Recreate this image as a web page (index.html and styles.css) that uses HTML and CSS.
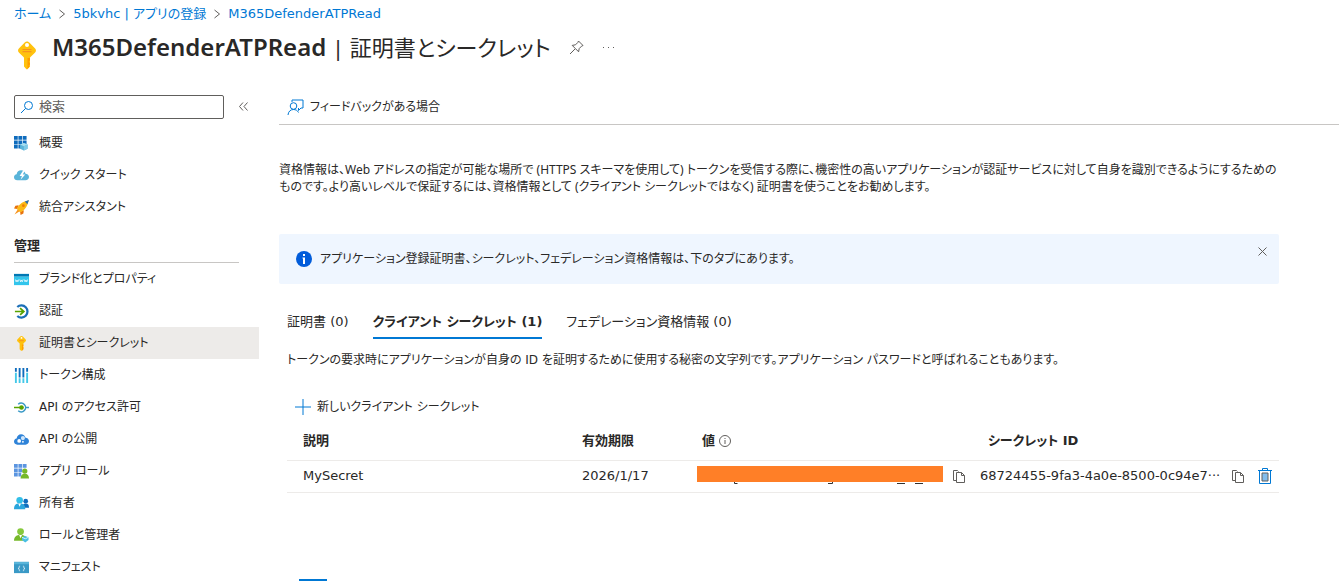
FILE: index.html
```html
<!DOCTYPE html>
<html lang="ja">
<head>
  <meta charset="UTF-8">
  <meta name="viewport" content="width=device-width, initial-scale=1">
  <title>M365DefenderATPRead | 証明書とシークレット</title>
  <link rel="stylesheet" href="styles.css">
</head>
<body>

  <header class="page-header">
    <nav class="breadcrumb" aria-label="階層リンク">
      <a href="#">ホーム</a>
      <svg class="chevron" viewBox="0 0 8 10"><path d="M1.500 1 6.500 5 1.500 9"/></svg>
      <a href="#">5bkvhc | アプリの登録</a>
      <svg class="chevron" viewBox="0 0 8 10"><path d="M1.500 1 6.500 5 1.500 9"/></svg>
      <a href="#">M365DefenderATPRead</a>
    </nav>
    <div class="title-row">
      <svg class="title-icon" viewBox="0 0 18 29">
        <path d="M9 .5c1 0 1.600.4 2.300 1.100l5.600 5.600c1.400 1.400 1.400 3.200 0 4.600L13 15.500c-.8.700-1 1-1 1.900v8.100l-2.300 2.600c-.5.500-1 .5-1.500 0L6 25.500v-8.100c0-.9-.2-1.200-1-1.900L1.100 11.800c-1.400-1.400-1.400-3.200 0-4.600l5.600-5.600C7.400.9 8 .5 9 .5z" fill="#ffc20e"/>
        <path d="M9.500 17h2.500v2.500l-1.500 1.200 1.500 1.300v1.400l-1.500 1.200 1 1.200-2 2z" fill="#ff9c00"/>
        <circle cx="9" cy="4" r="2" fill="#fff"/>
        <path d="M4.500 8.500h9M4.500 10.700h9" stroke="#f7931e" stroke-width="1.200"/>
      </svg>
      <h1><b>M365DefenderATPRead</b> | 証明書とシークレット</h1>
      <button class="icon-button pin" aria-label="ピン留め">
        <svg width="15" height="15" viewBox="0 0 15 15"><path d="M9.500 1 14 5.500 12.500 6.200 10.200 8.600 9.600 11.800 6.400 8.600 3.200 5.400 6.500 4.800 8.800 2.500zM6.200 8.800 1 14"/></svg>
      </button>
      <button class="icon-button more" aria-label="その他">
        <svg width="13" height="3" viewBox="0 0 13 3"><path d="M1 1h1v1H1zM6 1h1v1H6zM11 1h1v1h-1z"/></svg>
      </button>
    </div>
  </header>

  <div class="layout">
    <aside class="sidebar">
      <div class="search-row">
        <div class="search-box">
          <svg width="14" height="14" viewBox="0 0 14 14"><circle cx="8.500" cy="5.500" r="4"/><path d="M5.600 8.400 1 13"/></svg>
          <input type="text" placeholder="検索" aria-label="検索">
        </div>
        <button class="icon-button collapse" aria-label="メニューを折りたたむ">
          <svg width="9" height="9" viewBox="0 0 9 9"><path d="M4 .5l-3.500 4 3.500 4M8.500.5 5 4.500l3.500 4"/></svg>
        </button>
      </div>

      <ul class="menu">
        <li><a href="#">
          <svg viewBox="0 0 16 16"><path d="M0 0h4v4H0zM4.700 0h4v4h-4zM9.400 0h4v4h-4zM0 4.700h4v4H0zM4.700 4.700h4v4h-4zM9.400 4.700h4v4h-4zM0 9.400h4v4H0zM4.700 9.400h4v4h-4z" fill="#0f6cbd"/><path d="M10.500 7.500 14.500 9v4.500L10.500 15.500 6.500 13.500V9z" fill="#5ab4d9"/><path d="M10.500 7.500 14.500 9l-4 2-4-2z" fill="#a8def0"/><path d="M10.500 11v4.500l4-2V9z" fill="#7fc9e6"/></svg>
          概要</a></li>
        <li><a href="#">
          <svg viewBox="0 0 16 16"><path d="M3.500 13C1.500 13 0 11.700 0 9.800c0-1.700 1.200-2.900 2.800-3.100C3.200 4.200 5 2.500 7.600 2.500c2.400 0 4 1.400 4.700 3.500 2.200.1 3.700 1.600 3.700 3.500 0 2-1.600 3.500-3.700 3.500z" fill="#59b4d9"/><path d="M9.500 3 6 8.500h2.500L7 12.500 12 7H9.300l2-3.500z" fill="#fff"/></svg>
          クイック スタート</a></li>
        <li><a href="#">
          <svg viewBox="0 0 16 16"><path d="M5 5.500 1.500 6 0 9l3.500.5zM10.500 11 10 14.500 7 16l-.5-3.500z" fill="#e8720c"/><path d="M3 9.500C5 4.500 9.500 1.500 15.500.5 14.500 6.500 11.500 11 6.500 13z" fill="#fbb917"/><path d="M4 10 .5 15.500 6 12z" fill="#f7941d"/><path d="M11.500 1.700 16 0l-1.700 4.500z" fill="#2a6fb5"/><circle cx="10" cy="6" r="1.400" fill="#f07c00"/></svg>
          統合アシスタント</a></li>
      </ul>

      <h2 class="menu-title">管理</h2>

      <ul class="menu">
        <li><a href="#">
          <svg viewBox="0 0 16 16"><path d="M0 2h16v3H0z" fill="#0078b4"/><path d="M0 5h16v9H0z" fill="#32c5ec"/><path d="M1.500 8l.8 2.500L3.200 8.500l.9 2L5 8M6.200 8l.8 2.500.9-2 .9 2L9.700 8M11 8l.8 2.500.9-2 .9 2 .9-2.500" fill="none" stroke="#fff" stroke-width=".8"/></svg>
          ブランド化とプロパティ</a></li>
        <li><a href="#">
          <svg viewBox="0 0 16 16"><path d="M3.500 3.200A6.500 6.500 0 1 1 3.500 12.800" fill="none" stroke="#1b6fb8" stroke-width="2.400"/><path d="M1 8h8.500M6.500 4.500 10.500 8l-4 3.500" fill="none" stroke="#57a300" stroke-width="1.800"/></svg>
          認証</a></li>
        <li class="active"><a href="#" aria-current="page">
          <svg viewBox="0 0 16 16"><path d="M8 0c.6 0 1 .2 1.400.6l2.800 2.800c.8.800.8 1.600 0 2.400L10 8v6l-1.500 1.600c-.3.300-.7.300-1 0L6 14V8L3.800 5.800c-.8-.8-.8-1.600 0-2.400L6.600.6C7 .2 7.400 0 8 0z" fill="#ffc20e"/><path d="M8.500 9H10v1.500l-.8.700.8.800v2l-1.500 1.600z" fill="#ff9c00"/><circle cx="8" cy="2" r="1" fill="#fff"/><path d="M5.500 5h5" stroke="#f7931e"/></svg>
          証明書とシークレット</a></li>
        <li><a href="#">
          <svg viewBox="0 0 16 16"><path d="M1 0h2v4H1zM5 0h2v10H5zM9 0h2v10H9zM13 0h2v4h-2z" fill="#0f6cbd"/><path d="M1 5h2v11H1zM5 11h2v5H5zM9 11h2v5H9zM13 5h2v11h-2z" fill="#43c8e8"/></svg>
          トークン構成</a></li>
        <li><a href="#">
          <svg viewBox="0 0 16 16"><path d="M4.500 4.500A4.700 4.700 0 1 1 4.500 11.500M12.700 8H16" fill="none" stroke="#3999c6" stroke-width="1.600"/><path d="M0 8h7" stroke="#57a300" stroke-width="1.600"/><circle cx="8" cy="8" r="2.500" fill="#57a300"/></svg>
          API のアクセス許可</a></li>
        <li><a href="#">
          <svg viewBox="0 0 16 16"><path d="M3.500 13.500C1.500 13.500 0 12 0 10.200c0-1.700 1.200-3 2.800-3.200C3.200 4.200 5 2.300 7.600 2.300c2.400 0 4 1.500 4.700 3.700 2.200.1 3.700 1.700 3.700 3.700 0 2.200-1.600 3.800-3.700 3.800z" fill="#2f83d8"/><circle cx="5.500" cy="9.500" r="2" fill="#fff"/><circle cx="9.500" cy="6.500" r="2.200" fill="#cfe6fa"/><circle cx="9.500" cy="10.500" r="1" fill="#fff"/></svg>
          API の公開</a></li>
        <li><a href="#">
          <svg viewBox="0 0 16 16"><path d="M0 0h4v4H0zM4.700 0h4v4h-4zM9.400 0h4v4h-4zM0 4.700h4v4H0zM4.700 4.700h4v4h-4zM0 9.400h4v4H0zM4.700 9.400h3v4h-3z" fill="#5b95e0"/><circle cx="11.500" cy="7.500" r="2.800" fill="#76b82a"/><path d="M7 15.500c0-3 1.500-5 4.500-5s4.500 2 4.500 5z" fill="#76b82a"/></svg>
          アプリ ロール</a></li>
        <li><a href="#">
          <svg viewBox="0 0 16 16"><circle cx="12.500" cy="5.500" r="2.500" fill="#0f6cbd"/><path d="M9 12.500c0-3 1-4.500 3.500-4.500S16 9.500 16 12.500z" fill="#0f6cbd"/><circle cx="6" cy="4.500" r="3.500" fill="#32bfe8"/><path d="M0 14c0-4 2-6.200 6-6.200s6 2.200 6 6.200z" fill="#2aa5dc"/><path d="M4.500 8 6 11.500 7.500 8z" fill="#fff"/></svg>
          所有者</a></li>
        <li><a href="#">
          <svg viewBox="0 0 16 16"><circle cx="7" cy="3.800" r="3.600" fill="#86c93d"/><path d="M0 13.500C0 9.500 3 7.300 7 7.300s6 2.200 6 6.200z" fill="#76b82a"/><path d="M5.500 7.500 7 11l1.500-3.500z" fill="#fff"/><path d="M8.500 9.800 12 8.500l3.500 1.300v3L12 15.500l-3.500-2.700z" fill="#48bfe3"/><path d="M8.500 9.800 12 11.500l3.500-1.700" fill="none" stroke="#d6f3fc"/></svg>
          ロールと管理者</a></li>
        <li><a href="#">
          <svg viewBox="0 0 16 16"><path d="M0 2h16v12H0z" fill="#3999c6"/><path d="M0 2h16v2.500H0z" fill="#59b4d9"/><path d="M6.500 6.500c-1 0-1 .4-1 1.200s-.3 1.300-1 1.300c.7 0 1 .5 1 1.300s0 1.200 1 1.200M9.500 6.500c1 0 1 .4 1 1.200s.3 1.300 1 1.300c-.7 0-1 .5-1 1.300s0 1.200-1 1.200" fill="none" stroke="#fff" stroke-width=".8"/></svg>
          マニフェスト</a></li>
      </ul>
    </aside>

    <main class="content">
      <div class="command-bar">
        <button class="command">
          <svg width="17" height="17" viewBox="0 0 17 17"><circle cx="6.500" cy="7" r="3.300"/><path d="M1 16c.3-3.500 2.500-5.500 5.500-5.500 2.200 0 4 1 5 3M5 3V1h11v8h-2l-2.500 2.500V9"/></svg>
          フィードバックがある場合
        </button>
      </div>

      <div class="content-body">
        <p class="intro">資格情報は、Web アドレスの指定が可能な場所で (HTTPS スキーマを使用して) トークンを受信する際に、機密性の高いアプリケーションが認証サービスに対して自身を識別できるようにするための<br>ものです。より高いレベルで保証するには、資格情報として (クライアント シークレットではなく) 証明書を使うことをお勧めします。</p>

        <div class="banner">
          <svg width="16" height="16" viewBox="0 0 16 16"><circle cx="8" cy="8" r="8" fill="#015cda"/><path d="M7 3h2v2H7zM6.500 6.500H9V13H7V7.500h-.5z" fill="#fff"/></svg>
          <span>アプリケーション登録証明書、シークレット、フェデレーション資格情報は、下のタブにあります。</span>
          <button class="icon-button close" aria-label="閉じる">
            <svg width="9" height="9" viewBox="0 0 9 9"><path d="M.5.5l8 8M8.500.5l-8 8"/></svg>
          </button>
        </div>

        <div class="tabs" role="tablist">
          <button role="tab" aria-selected="false">証明書 (0)</button>
          <button role="tab" aria-selected="true" class="selected">クライアント シークレット (1)</button>
          <button role="tab" aria-selected="false">フェデレーション資格情報 (0)</button>
        </div>

        <section class="tab-panel">
          <p>トークンの要求時にアプリケーションが自身の ID を証明するために使用する秘密の文字列です。アプリケーション パスワードと呼ばれることもあります。</p>

          <button class="command add">
            <svg width="16" height="16" viewBox="0 0 16 16"><path d="M8 0v16M0 8h16"/></svg>
            新しいクライアント シークレット
          </button>

          <table class="secrets">
            <thead>
              <tr>
                <th class="col-name">説明</th>
                <th class="col-expires">有効期限</th>
                <th class="col-value"><span class="cell">値
                  <svg width="12" height="12" viewBox="0 0 12 12"><circle cx="6" cy="6" r="5.500"/><path d="M6 5v4M6 3v1"/></svg></span></th>
                <th class="col-id">シークレット ID</th>
              </tr>
            </thead>
            <tbody>
              <tr>
                <td class="col-name">MySecret</td>
                <td>2026/1/17</td>
                <td>
                  <span class="cell">
                    <svg class="redacted" width="246" height="20" viewBox="0 0 246 20"><path d="M0 0h246v16H0z" fill="#ff7f27"/><path d="M37.500 16v1.500h3M131 17.500h4.500V16M200 17.500h8M218 17.500h8" fill="none" stroke="#323130"/></svg>
                    <button class="icon-button copy" aria-label="値をコピー">
                      <svg width="12" height="13" viewBox="0 0 12 13"><path d="M3.500 10.500h-3V.5h4l1 1M3.500 2.500h5l3 3v7h-8zM8.500 2.500v3h3"/></svg>
                    </button>
                  </span>
                </td>
                <td>
                  <span class="cell">
                    <span class="secret-id">68724455-9fa3-4a0e-8500-0c94e7···</span>
                    <button class="icon-button copy" aria-label="シークレット ID をコピー">
                      <svg width="12" height="13" viewBox="0 0 12 13"><path d="M3.500 10.500h-3V.5h4l1 1M3.500 2.500h5l3 3v7h-8zM8.500 2.500v3h3"/></svg>
                    </button>
                    <button class="icon-button delete" aria-label="削除">
                      <svg width="14" height="16" viewBox="0 0 14 16"><path d="M4 5h6v8H4z" fill="#83bdec"/><path d="M0 2.500h14M4.500 2.500v-2h5v2M1.500 2.500v13h11v-13" fill="none" stroke="#0078d4"/></svg>
                    </button>
                  </span>
                </td>
              </tr>
            </tbody>
          </table>
        </section>
        <div class="next-marker"></div>
      </div>
    </main>
  </div>

</body>
</html>
```

FILE: styles.css
```css
* {
  box-sizing: border-box;
}

body {
  margin: 0;
  background: #fff;
  color: #292827;
  font-family: "DejaVu Sans", "Noto Sans CJK JP", sans-serif;
  font-size: 12px;
  line-height: 18px;
  font-feature-settings: "palt";
}

h1, h2, p, ul {
  margin: 0;
  padding: 0;
}

a {
  color: #0078d4;
  text-decoration: none;
}

svg {
  flex: none;
  fill: none;
}

button {
  font: inherit;
  font-feature-settings: inherit;
  color: inherit;
  background: none;
  border: 0;
  padding: 0;
  cursor: pointer;
}

.icon-button {
  display: flex;
  flex: none;
  stroke: #605e5c;
}

/* header */
.page-header {
  padding: 4px 14px 0;
}

.breadcrumb {
  display: flex;
  align-items: center;
  gap: 7px;
  font-size: 13px;
  line-height: 20px;
}

.chevron {
  width: 8px;
  height: 10px;
  stroke: #605e5c;
}

.title-row {
  display: flex;
  align-items: center;
  height: 46px;
}

.title-icon {
  width: 18px;
  height: 29px;
  margin: 16px 16px 0 4px;
}

h1 {
  font-family: "Noto Sans", "Noto Sans CJK JP", sans-serif;
  font-size: 22px;
  line-height: 32px;
  font-weight: 400;
}

h1 b {
  font-size: 24px;
  font-weight: 600;
}

.pin {
  margin-left: 18px;
}

.more {
  margin-left: 18px;
}

.more svg {
  fill: #605e5c;
  stroke: none;
}

/* sidebar */
.layout {
  display: flex;
  padding-top: 20px;
}

.sidebar {
  flex: none;
  width: 259px;
}

.search-row {
  display: flex;
  align-items: center;
  gap: 15px;
  height: 33px;
  padding-left: 14px;
}

.search-box {
  display: flex;
  align-items: center;
  gap: 5px;
  width: 210px;
  height: 24px;
  padding: 0 5px;
  border: 1px solid #605e5c;
  border-radius: 2px;
  stroke: #0078d4;
}

.search-box input {
  flex: 1;
  min-width: 0;
  padding: 0;
  border: 0;
  outline: none;
  font: inherit;
  font-size: 13px;
  background: none;
}

.search-box input::placeholder {
  color: #605e5c;
}

.menu {
  list-style: none;
}

.search-row + .menu {
  padding-top: 4px;
}

.menu a {
  display: flex;
  align-items: center;
  gap: 10px;
  height: 32px;
  padding-left: 14px;
  color: inherit;
}

.menu svg {
  width: 15px;
  height: 15px;
}

.menu .active {
  background: #edebe9;
}

.menu-title {
  margin: 12px 20px 0 14px;
  padding: 2px 0 7px;
  border-bottom: 1px solid #c8c6c4;
  font-size: 13px;
  line-height: 18px;
  font-weight: 700;
}

/* content */
.content {
  flex: 1;
  min-width: 0;
  padding-left: 20px;
}

.command-bar {
  display: flex;
  height: 35px;
  padding-left: 8px;
  border-bottom: 1px solid #c8c6c4;
}

.command {
  display: flex;
  align-items: center;
  gap: 6px;
}

.command svg {
  stroke: #0078d4;
}

.content-body {
  max-width: 1000px;
  padding-top: 36px;
}

.intro {
  font-family: "Noto Sans", "Noto Sans CJK JP", sans-serif;
  line-height: 17px;
}

.banner {
  display: flex;
  align-items: center;
  gap: 8px;
  height: 50px;
  margin-top: 39px;
  padding: 0 12px 0 17px;
  border-radius: 2px;
  background: #eff6ff;
}

.close {
  align-self: flex-start;
  margin: 13px 0 0 auto;
}

.tabs {
  display: flex;
  gap: 24px;
  padding: 23px 8px 0;
  font-size: 13px;
}

.tabs button {
  height: 32px;
  border-bottom: 2px solid transparent;
}

.tabs .selected {
  border-color: #0078d4;
  font-weight: 700;
}

.tab-panel {
  padding: 12px 0 0 8px;
}

.add {
  height: 32px;
  margin-top: 22px;
  padding-left: 8px;
}

.secrets {
  width: 100%;
  table-layout: fixed;
  border-collapse: collapse;
  font-size: 13px;
}

.secrets th {
  height: 37px;
  padding: 0;
  text-align: left;
}

.secrets td {
  height: 32px;
  padding: 0;
}

.secrets tr {
  border-bottom: 1px solid #edebe9;
}

.secrets .col-name {
  width: 295px;
  padding-left: 16px;
}

.secrets .col-expires {
  width: 115px;
}

.secrets .col-value {
  width: 283px;
  padding-left: 5px;
}

.secrets .col-id {
  padding-left: 8px;
}

.cell {
  display: flex;
  align-items: center;
  gap: 4px;
}

.cell > svg {
  stroke: #605e5c;
}

.cell > .redacted {
  stroke: none;
}

.copy {
  margin-left: 6px;
}

.secret-id {
  width: 242px;
  white-space: nowrap;
}

.delete {
  margin-left: 10px;
}

.next-marker {
  width: 28px;
  height: 2px;
  margin: 86px 0 0 20px;
  background: #0078d4;
}
```
